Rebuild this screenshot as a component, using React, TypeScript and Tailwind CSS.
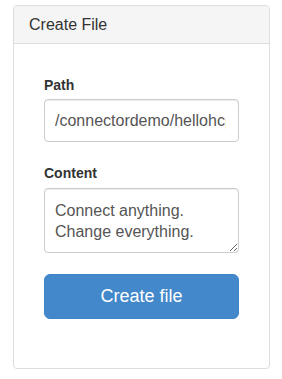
export default function App() {
  return (
    <div className="min-h-[379px] bg-white pt-[5px] pl-[13px] font-['Liberation_Sans',Arial,sans-serif] text-[#333]">
      <div className="w-[257px] h-[364px] rounded-[4px] border border-[#ddd] bg-white flex flex-col">
        <div className="h-[38px] bg-[#f5f5f5] border-b border-[#ddd] rounded-t-[3px] px-[15px] flex items-center text-[16px]">
          Create File
        </div>
        <form className="px-[30px] pt-[31px] flex flex-col" onSubmit={(e) => e.preventDefault()}>
          <label className="text-[14px] font-bold leading-[20px] mb-[4px]">Path</label>
          <input
            readOnly
            value="/connectordemo/hellohcp.txt"
            className="h-[43px] w-[195px] rounded-[4px] border border-[#ccc] pl-[10px] pr-[12px] text-[16px] text-[#555] outline-none shadow-[inset_0_1px_1px_rgba(0,0,0,0.075)]"
          />
          <label className="mt-[21px] text-[14px] font-bold leading-[20px] mb-[5px]">Content</label>
          <textarea
            readOnly
            value={"Connect anything.\nChange everything."}
            className="h-[65px] w-[195px] rounded-[4px] border border-[#ccc] px-[10px] py-[11px] text-[16px] leading-[21px] text-[#555] outline-none resize-y shadow-[inset_0_1px_1px_rgba(0,0,0,0.075)]"
          />
          <button
            type="submit"
            className="mt-[21px] h-[45px] w-[195px] rounded-[6px] border border-[#3f84c8] bg-[#4288cb] text-white text-[18px]"
          >
            Create file
          </button>
        </form>
      </div>
    </div>
  );
}
